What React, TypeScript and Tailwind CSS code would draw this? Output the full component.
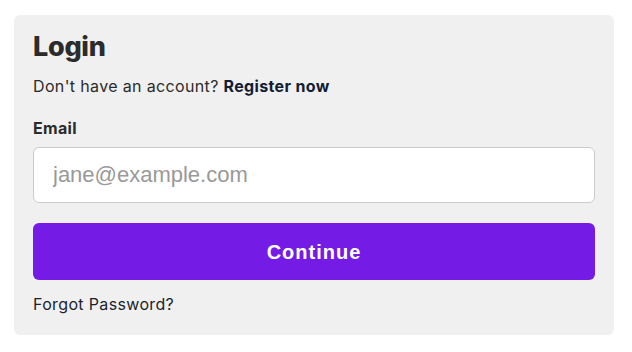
import React from "react";

export default function App() {
  return (
    <div className="w-[632px] h-[352px] bg-white pt-[15px] pl-[14px]">
      <div
        className="w-[600px] h-[320px] bg-[#f0f0f0] rounded-[6px] px-[19px] pt-[15px] text-[#2b2b2b]"
        style={{ fontFamily: "Inter, 'Noto Sans', sans-serif" }}
      >
        <h1 className="text-[27px] font-extrabold leading-[34px] text-[#2b2b2b] tracking-[-0.3px]">Login</h1>
        <p className="mt-[12px] text-[16px] leading-[20px] tracking-[0.35px]">
          Don't have an account?{" "}
          <a className="font-bold text-[#141c33]">Register now</a>
        </p>
        <label className="block mt-[22px] text-[16px] leading-[20px] font-bold tracking-[0.3px]">Email</label>
        <input
          type="email"
          placeholder="jane@example.com"
          className="block mt-[9px] w-full h-[56px] bg-white border border-[#cccccc] rounded-[6px] px-[19px] text-[22px] placeholder:text-[#999999] outline-none"
          style={{ fontFamily: "'Liberation Sans', Arial, sans-serif" }}
        />
        <button
          className="block mt-[20px] w-full h-[57px] bg-[#741ce6] rounded-[6px] text-white text-[20px] font-bold tracking-[1px]"
          style={{ fontFamily: "'Liberation Sans', Arial, sans-serif" }}
        >
          Continue
        </button>
        <p className="mt-[14px] text-[16px] leading-[20px] text-[#1a1f2e] tracking-[0.35px]">Forgot Password?</p>
      </div>
    </div>
  );
}
